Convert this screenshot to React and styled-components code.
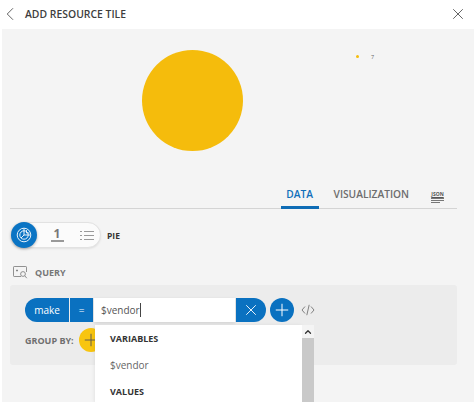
import React from 'react';
import styled, {createGlobalStyle} from 'styled-components';
import {X, Plus, ChevronLeft, ChevronUp} from 'lucide-react';

const Global = createGlobalStyle`
  html, body {
    margin: 0;
    padding: 0;
    background: #fff;
    overflow: hidden;
  }
  * {
    box-sizing: border-box;
  }
  body {
    font-family: "Open Sans", "Liberation Sans", sans-serif;
  }
`

const Page = styled.div`
  width: 474px;
  height: 402px;
  overflow: hidden;
  display: flex;
  flex-direction: column;
`

const Header = styled.header`
  height: 29px;
  flex: none;
  padding: 0 7px 2px 0;
  display: flex;
  align-items: center;
  color: #555;
`

const BackIcon = styled(ChevronLeft)`
  margin-left: -1px;
`

const Title = styled.h1`
  flex: 1;
  margin: 0 0 0 4px;
  font-size: 10.4px;
  font-weight: 600;
  color: #3d3d3d;
`

const Body = styled.main`
  flex: 1;
  margin-left: 2px;
  padding: 0 17px 0 8px;
  background: #f4f4f4;
`

const ChartArea = styled.div`
  height: 137px;
  padding: 21px 0 0 132px;
  display: flex;
`

const Pie = styled.div`
  width: 101px;
  height: 101px;
  border-radius: 50%;
  background: #f5bc0c;
`

const Legend = styled.div`
  margin: 2px 0 0 113px;
  height: 9px;
  display: flex;
  align-items: center;
  gap: 12px;
  font-size: 5.5px;
  color: #666;
`

const LegendDot = styled.span`
  width: 3px;
  height: 3px;
  border-radius: 50%;
  background: #f5bc0c;
`

const Tabs = styled.nav`
  height: 43px;
  display: flex;
  justify-content: flex-end;
  align-items: flex-end;
  padding-right: 13px;
  border-bottom: 1px solid #d4d4d4;
`

const Tab = styled.div`
  height: 28px;
  padding: 0 ${p => p.$active ? 5.5 : 6}px;
  margin-right: ${p => p.$gap}px;
  margin-bottom: -1px;
  display: flex;
  align-items: center;
  font-size: 10.2px;
  font-weight: 600;
  color: ${p => p.$active ? '#0f6fba' : '#6d6d6d'};
  border-bottom: 3px solid ${p => p.$active ? '#0f6cb5' : 'transparent'};
`

const JsonTab = styled.div`
  width: 13px;
  display: flex;
  flex-direction: column;
  gap: 1px;
  font-size: 5px;
  font-weight: 700;
  line-height: 5px;
  color: #555;
  text-decoration: underline;
  text-align: center;
  margin-bottom: 5px;
`

const JsonLine = styled.span`
  height: 1px;
  width: ${p => p.$w}px;
  background: #777;
`

const TypeRow = styled.div`
  margin-top: 13px;
  display: flex;
  align-items: center;
  gap: 6px;
`

const TypeSwitch = styled.div`
  width: 90px;
  height: 26px;
  margin-left: 1px;
  border: 1px solid #e2e2e2;
  border-radius: 13px;
  background: #fbfbfb;
  display: flex;
  align-items: center;
  box-shadow: 0 1px 2px rgba(0, 0, 0, 0.08);
`

const TypeActive = styled.div`
  width: 26px;
  height: 26px;
  margin-left: -1px;
  border-radius: 50%;
  background: #0a74c4;
  box-shadow: 0 1px 3px rgba(0, 0, 0, 0.3);
  display: flex;
  align-items: center;
  justify-content: center;
`

const TypeNumber = styled.span`
  margin-left: 13px;
  width: 14px;
  display: flex;
  flex-direction: column;
  align-items: center;
  font-size: 12px;
  font-weight: 700;
  line-height: 11px;
  color: #777;
  &::after {
    content: '';
    width: 13px;
    height: 1.5px;
    margin-top: 1px;
    background: #999;
  }
`

const TypeList = styled.span`
  margin-left: 16px;
  display: flex;
`

const TypeName = styled.span`
  font-size: 8.5px;
  font-weight: 700;
  color: #333;
`

const QueryLabel = styled.div`
  margin: 15px 0 0 3px;
  height: 18px;
  display: flex;
  align-items: center;
  gap: 7px;
  font-size: 9px;
  font-weight: 700;
  color: #777;
`

const QueryPanel = styled.section`
  position: relative;
  margin-top: 4px;
  height: 80px;
  padding: 13px 15px;
  background: #ececec;
  border-radius: 3px;
`

const FilterRow = styled.div`
  display: flex;
  align-items: center;
  height: 24px;
`

const Pill = styled.div`
  height: 24px;
  display: flex;
  align-items: center;
  justify-content: center;
  width: ${p => p.$w}px;
  margin-right: 1px;
  background: #0a71c0;
  color: #fff;
  font-size: 10px;
  border-radius: ${p => p.$radius || '0'};
`

const SearchInput = styled.div`
  width: 141px;
  height: 24px;
  margin-right: 1px;
  padding-left: 7px;
  display: flex;
  align-items: center;
  background: #fff;
  font-size: 10px;
  color: #555;
  box-shadow: 0 1px 3px rgba(0, 0, 0, 0.12);
`

const Caret = styled.span`
  width: 1px;
  height: 14px;
  background: #444;
`

const RoundButton = styled.div`
  width: 24px;
  height: 24px;
  margin: 0 7px 0 3px;
  border-radius: 50%;
  background: #0a71c0;
  display: flex;
  align-items: center;
  justify-content: center;
`

const GroupRow = styled.div`
  margin-top: 6px;
  height: 24px;
  display: flex;
  align-items: center;
  gap: 5px;
`

const GroupLabel = styled.span`
  font-size: 9px;
  font-weight: 700;
  color: #6f6f6f;
`

const AddGroup = styled.div`
  width: 24px;
  height: 24px;
  border-radius: 50%;
  background: #f8c50f;
  display: flex;
  align-items: center;
  justify-content: center;
`

const Dropdown = styled.div`
  position: absolute;
  left: 85px;
  top: 40px;
  width: 219px;
  height: 77px;
  display: flex;
`

const DropdownList = styled.ul`
  width: 207px;
  margin: 0;
  padding: 0 0 0 15px;
  list-style: none;
  background: #fff;
  box-shadow: 0 1px 4px rgba(0, 0, 0, 0.1);
`

const DropdownItem = styled.li`
  height: 26.5px;
  display: flex;
  align-items: center;
  font-size: ${p => p.$head ? '9px' : '10px'};
  font-weight: ${p => p.$head ? 700 : 400};
  color: ${p => p.$head ? '#333' : '#666'};
`

const Scrollbar = styled.div`
  width: 12px;
  background: #f4f4f4;
  display: flex;
  flex-direction: column;
  align-items: center;
  color: #333;
`

const ScrollArrow = styled.div`
  height: 13px;
  display: flex;
  align-items: center;
`

const ScrollThumb = styled.div`
  flex: 1;
  width: 100%;
  background: #c9c9c9;
`

const PieTypeIcon = () => (
    <svg width="16" height="16" viewBox="0 0 16 16" fill="none" stroke="#fff" strokeWidth="0.9">
        <circle cx="8" cy="8" r="6.8"/>
        <circle cx="8" cy="8" r="4.2"/>
        <path d="M8 1.5V8H14M8 8l-3 3"/>
        <path d="M10.5 3v3h3" strokeWidth="0.8"/>
    </svg>
)

const ListIcon = () => (
    <svg width="14" height="11" viewBox="0 0 14 11" fill="none" stroke="#999" strokeWidth="1">
        <path d="M0 1.5h2M4 1.5h10M0 5.5h2M4 5.5h10M0 9.5h2M4 9.5h10"/>
    </svg>
)

const QueryIcon = () => (
    <svg width="15" height="13" viewBox="0 0 15 13" fill="none" stroke="#777" strokeWidth="0.8">
        <path d="M8 10.5H1.2a.7.7 0 0 1-.7-.7V1.2a.7.7 0 0 1 .7-.7h11.6a.7.7 0 0 1 .7.7V6"/>
        <path d="M3 4.5h2M4 3.5v2"/>
        <circle cx="10" cy="8" r="2.4"/>
        <path d="M11.8 9.8l2 2.4"/>
    </svg>
)

const CodeIcon = () => (
    <svg width="14" height="12" viewBox="0 0 14 12" fill="none" stroke="#666" strokeWidth="0.8">
        <path d="M4 2.5L1 6l3 3.5M10 2.5L13 6l-3 3.5M8.2 0.8L5.8 11.2"/>
    </svg>
)

const App = () => {
    return (
        <Page>
            <Global/>
            <Header>
                <BackIcon size={22} strokeWidth={1} color="#555"/>
                <Title>ADD RESOURCE TILE</Title>
                <X size={18} strokeWidth={1.1} color="#444"/>
            </Header>
            <Body>
                <ChartArea>
                    <Pie/>
                    <Legend>
                        <LegendDot/>
                        <span>7</span>
                    </Legend>
                </ChartArea>
                <Tabs>
                    <Tab $active $gap={9}>DATA</Tab>
                    <Tab $gap={16}>VISUALIZATION</Tab>
                    <JsonTab>
                        <span>JSON</span>
                        <JsonLine $w={13}/>
                        <JsonLine $w={13}/>
                        <JsonLine $w={9}/>
                    </JsonTab>
                </Tabs>
                <TypeRow>
                    <TypeSwitch>
                        <TypeActive><PieTypeIcon/></TypeActive>
                        <TypeNumber>1</TypeNumber>
                        <TypeList><ListIcon/></TypeList>
                    </TypeSwitch>
                    <TypeName>PIE</TypeName>
                </TypeRow>
                <QueryLabel>
                    <QueryIcon/>
                    <span>QUERY</span>
                </QueryLabel>
                <QueryPanel>
                    <FilterRow>
                        <Pill $w={44} $radius="12px 0 0 12px">make</Pill>
                        <Pill $w={23}>=</Pill>
                        <SearchInput>$vendor<Caret/></SearchInput>
                        <Pill $w={30} $radius="0 12px 12px 0">
                            <X size={18} strokeWidth={1.2} color="#fff"/>
                        </Pill>
                        <RoundButton>
                            <Plus size={20} strokeWidth={1.2} color="#fff"/>
                        </RoundButton>
                        <CodeIcon/>
                    </FilterRow>
                    <GroupRow>
                        <GroupLabel>GROUP BY:</GroupLabel>
                        <AddGroup>
                            <Plus size={20} strokeWidth={1.1} color="#555"/>
                        </AddGroup>
                    </GroupRow>
                    <Dropdown>
                        <DropdownList>
                            <DropdownItem $head>VARIABLES</DropdownItem>
                            <DropdownItem>$vendor</DropdownItem>
                            <DropdownItem $head>VALUES</DropdownItem>
                        </DropdownList>
                        <Scrollbar>
                            <ScrollArrow><ChevronUp size={10} strokeWidth={3}/></ScrollArrow>
                            <ScrollThumb/>
                        </Scrollbar>
                    </Dropdown>
                </QueryPanel>
            </Body>
        </Page>
    );
};

export default App;
